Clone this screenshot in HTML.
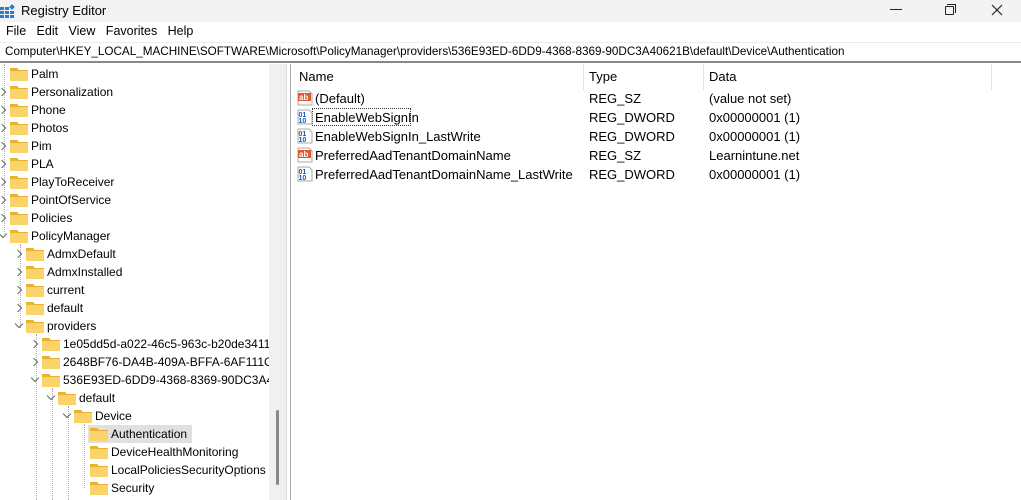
<!DOCTYPE html><html><head><style>
*{margin:0;padding:0;box-sizing:border-box}
body{width:1021px;height:500px;overflow:hidden;background:#fff;font-family:"Liberation Sans",sans-serif;font-size:12px;color:#000;position:relative}
.a{position:absolute;white-space:nowrap}
.f{position:absolute;width:18px;height:14px}
.t{position:absolute;line-height:18px;height:18px;white-space:nowrap}
.ar{position:absolute;width:6px;height:6px;border-right:1.3px solid #666;border-bottom:1.3px solid #666}
.r{transform:rotate(-45deg)}.d{transform:rotate(45deg)}
.dl{position:absolute;border-left:1px dotted #aaa}
.li{position:absolute;font-size:13px;line-height:19px;white-space:nowrap}
</style></head><body>
<div class="a" style="left:0;top:0;width:1021px;height:22px;background:#f3f3f3"></div>
<svg class="a" style="left:0;top:2px" width="16" height="17"><g fill="#2a7bd6"><rect x="0" y="5" width="4" height="3"/><rect x="5" y="5" width="4" height="3"/><rect x="0" y="9" width="4" height="3"/><rect x="5" y="9" width="4" height="3"/><rect x="10" y="9" width="4" height="3"/><rect x="0" y="13" width="4" height="3"/><rect x="5" y="13" width="4" height="3"/><rect x="10" y="13" width="4" height="3"/><rect x="10" y="3" width="4" height="4" transform="rotate(45 12 5)"/></g></svg>
<div class="a" style="left:21px;top:3px;font-size:13px">Registry Editor</div>
<div class="a" style="left:890px;top:9px;width:12px;height:1px;background:#222"></div>
<div class="a" style="left:945px;top:6px;width:9px;height:9px;border:1px solid #222;border-radius:1px;background:#f3f3f3"></div>
<div class="a" style="left:947px;top:4px;width:9px;height:2px;border-top:1px solid #222;border-right:1px solid #222"></div>
<div class="a" style="left:955px;top:4px;width:1px;height:9px;background:#222"></div>
<svg class="a" style="left:991px;top:4px" width="12" height="12"><path d="M1 1L11 11M11 1L1 11" stroke="#222" stroke-width="1.2"/></svg>
<div class="a" style="left:6px;top:24px;font-size:12.5px">File&nbsp;&nbsp;&nbsp;Edit&nbsp;&nbsp;&nbsp;View&nbsp;&nbsp;&nbsp;Favorites&nbsp;&nbsp;&nbsp;Help</div>
<div class="a" style="left:0;top:42px;width:1021px;height:21px;border-top:1px solid #ececec;border-bottom:2px solid #888;background:#fff"></div>
<div class="a" style="left:5px;top:45px;font-size:11.7px">Computer\HKEY_LOCAL_MACHINE\SOFTWARE\Microsoft\PolicyManager\providers\536E93ED-6DD9-4368-8369-90DC3A40621B\default\Device\Authentication</div>
<div class="a" style="left:269px;top:64px;width:17px;height:436px;background:#f0f0f0"></div>
<div class="a" style="left:276px;top:410px;width:3px;height:75px;background:#888;border-radius:2px"></div>
<div class="a" style="left:286px;top:64px;width:5px;height:436px;background:#fff;border-left:1px solid #ddd;border-right:1px solid #aaa"></div>
<div class="a" style="left:88px;top:425px;width:104px;height:18px;background:#e0e0e0"></div>
<div class="dl" style="left:4px;top:64px;height:170px"></div>
<div class="dl" style="left:20px;top:244px;height:84px"></div>
<div class="dl" style="left:36px;top:334px;height:166px"></div>
<div class="dl" style="left:52px;top:388px;height:112px"></div>
<div class="dl" style="left:68px;top:406px;height:94px"></div>
<div class="dl" style="left:84px;top:424px;height:64px"></div>
<div id="tree" style="position:absolute;left:0;top:0;width:269px;height:500px;overflow:hidden"></div>
<div class="a" style="left:583px;top:64px;height:26px;border-left:1px solid #e5e5e5"></div>
<div class="a" style="left:703px;top:64px;height:26px;border-left:1px solid #e5e5e5"></div>
<div class="a" style="left:991px;top:64px;height:26px;border-left:1px solid #e5e5e5"></div>
<div class="a" style="left:299px;top:69px;font-size:13px">Name</div>
<div class="a" style="left:589px;top:69px;font-size:13px">Type</div>
<div class="a" style="left:709px;top:69px;font-size:13px">Data</div>
<div class="a" style="left:312px;top:108px;width:99px;height:18px;border:1px dotted #333"></div>
<div id="list"></div>
<script>
var T=[[0,'Palm',0],[0,'Personalization',1],[0,'Phone',1],[0,'Photos',1],[0,'Pim',1],[0,'PLA',1],[0,'PlayToReceiver',1],[0,'PointOfService',1],[0,'Policies',1],[0,'PolicyManager',2],[1,'AdmxDefault',1],[1,'AdmxInstalled',1],[1,'current',1],[1,'default',1],[1,'providers',2],[2,'1e05dd5d-a022-46c5-963c-b20de34117',1],[2,'2648BF76-DA4B-409A-BFFA-6AF111C29',1],[2,'536E93ED-6DD9-4368-8369-90DC3A406',2],[3,'default',2],[4,'Device',2],[5,'Authentication',0],[5,'DeviceHealthMonitoring',0],[5,'LocalPoliciesSecurityOptions',0],[5,'Security',0]];
var h='';T.forEach(function(e,i){var y=64+i*18,x=e[0]*16;
if(e[2]==1)h+='<div class="ar r" style="left:'+(x-1)+'px;top:'+(y+7)+'px"></div>';
if(e[2]==2)h+='<div class="ar d" style="left:'+(x)+'px;top:'+(y+5)+'px"></div>';
h+='<svg class="f" style="left:'+(x+10)+'px;top:'+(y+3)+'px" viewBox="0 0 18 14"><path d="M0 1h7l2 2h9v11H0z" fill="#e9b12f"/><rect x="0" y="4" width="18" height="10" fill="#fad46b"/></svg>';
h+='<div class="t" style="left:'+(x+31)+'px;top:'+(y+1)+'px;font-size:12px">'+e[1]+'</div>';});
document.getElementById('tree').innerHTML=h;
var L=[['ab','(Default)','REG_SZ','(value not set)'],['b','EnableWebSignIn','REG_DWORD','0x00000001 (1)'],['b','EnableWebSignIn_LastWrite','REG_DWORD','0x00000001 (1)'],['ab','PreferredAadTenantDomainName','REG_SZ','Learnintune.net'],['b','PreferredAadTenantDomainName_LastWrite','REG_DWORD','0x00000001 (1)']];
h='';L.forEach(function(e,i){var y=89+i*19;
h+='<svg class="a" style="left:297px;top:'+(y+1)+'px" width="16" height="16"><path d="M1 1h11l3 3v11H1z" fill="#fff" stroke="#aaa"/>'+(e[0]=='ab'?'<rect x="1" y="3" width="13" height="8" fill="#e05a2a"/><text x="2" y="10" font-size="8" fill="#fff" font-family="Liberation Sans" font-weight="bold">ab</text>':'<text x="1.5" y="8" font-size="7" fill="#1d55c0" font-family="Liberation Sans" font-weight="bold">01</text><text x="1.5" y="14" font-size="7" fill="#1d55c0" font-family="Liberation Sans" font-weight="bold">10</text>')+'</svg>';
h+='<div class="li" style="left:315px;top:'+y+'px">'+e[1]+'</div><div class="li" style="left:589px;top:'+y+'px">'+e[2]+'</div><div class="li" style="left:709px;top:'+y+'px">'+e[3]+'</div>';});
document.getElementById('list').innerHTML=h;
</script>
</body></html>
